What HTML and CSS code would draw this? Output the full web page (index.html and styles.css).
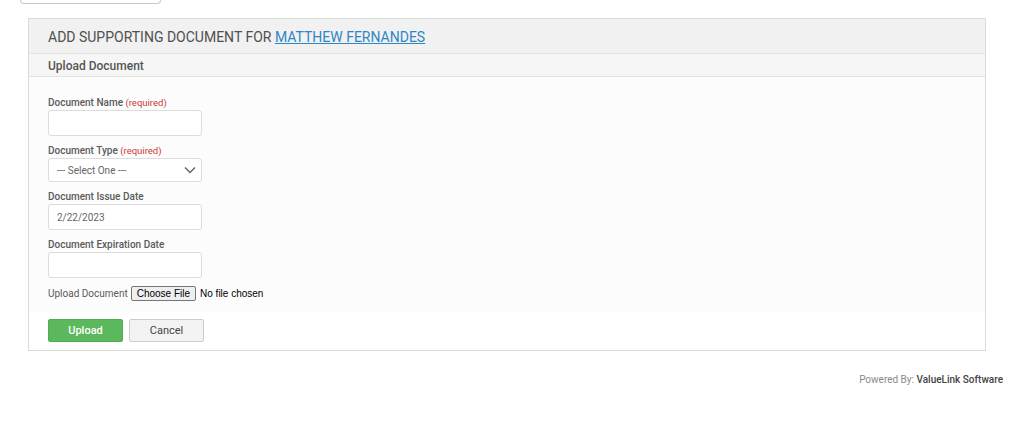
FILE: index.html
```html
<!DOCTYPE html>
<html>
<head>
<meta charset="utf-8">
<link rel="stylesheet" href="styles.css">
</head>
<body>
<div class="topbtn"></div>
<div class="panel">
  <div class="panel-head">ADD SUPPORTING DOCUMENT FOR <a href="#" class="name">MATTHEW FERNANDES</a></div>
  <div class="panel-sub">Upload Document</div>
  <div class="panel-body">
    <div class="field">
      <label class="lbl">Document Name <span class="req">(required)</span></label>
      <input class="inp" type="text">
    </div>
    <div class="field">
      <label class="lbl">Document Type <span class="req">(required)</span></label>
      <div class="select">
        <span>--- Select One ---</span>
        <svg width="12" height="8" viewBox="0 0 12 8"><path d="M1 1.5 L6 6.5 L11 1.5" fill="none" stroke="#666" stroke-width="1.5"/></svg>
      </div>
    </div>
    <div class="field">
      <label class="lbl">Document Issue Date</label>
      <input class="inp" type="text" value="2/22/2023">
    </div>
    <div class="field">
      <label class="lbl">Document Expiration Date</label>
      <input class="inp" type="text">
    </div>
    <div class="file-row">
      <span class="lbl">Upload Document</span>
      <span class="choose">Choose File</span>
      <span class="nofile">No file chosen</span>
    </div>
  </div>
  <div class="panel-foot">
    <button class="btn btn-green">Upload</button>
    <button class="btn btn-plain">Cancel</button>
  </div>
</div>
<div class="powered">Powered By: <span class="vl">ValueLink Software</span></div>
</body>
</html>
```
FILE: styles.css
```css
* { box-sizing: border-box; }
body {
  margin: 0;
  font-family: Roboto, "Liberation Sans", Arial, sans-serif;
  color: #555;
  background: #fff;
}
.topbtn {
  margin-left: 20px;
  width: 141px;
  height: 4px;
  border: 1px solid #c8c8c8;
  border-top: none;
  border-radius: 0 0 4px 4px;
  background: #fff;
}
.panel {
  margin: 14px 0 0 28px;
  width: 958px;
  border: 1px solid #d6dcd6;
}
.panel-head {
  height: 35px;
  background: #f1f1f1;
  border-bottom: 1px solid #e2e4e2;
  padding: 9px 0 0 19px;
  font-size: 14px;
  font-weight: 400;
  color: #4f4f4f;
  line-height: 18px;
}
.name { color: #2f86c6; text-decoration: underline; font-weight: 400; }
.panel-sub {
  height: 23px;
  background: #f6f6f6;
  border-bottom: 1px solid #e2e4e2;
  padding: 5px 0 0 19px;
  font-size: 12px;
  font-weight: 500;
  line-height: 14px;
}
.panel-body {
  background: #fcfcfc;
  padding: 19px 0 11px 19px;
}
.field { margin-bottom: 8px; }
.lbl {
  display: block;
  font-size: 10px;
  font-weight: 500;
  line-height: 13px;
  color: #5a5a5a;
  margin-bottom: 1px;
}
.req { color: #c9383b; font-weight: 400; font-size: 9.5px; }
.inp {
  display: block;
  width: 154px;
  height: 26px;
  border: 1px solid #dcdcdc;
  border-radius: 3px;
  background: #fff;
  padding: 0 8px;
  font-family: inherit;
  font-size: 10px;
  color: #666;
  outline: none;
}
.select {
  width: 154px;
  height: 24px;
  border: 1px solid #dcdcdc;
  border-radius: 3px;
  background: #fff;
  display: flex;
  align-items: center;
  justify-content: space-between;
  padding: 0 5px 0 8px;
  font-size: 10px;
  color: #666;
}
.file-row {
  display: flex;
  align-items: center;
  gap: 3px;
  height: 15px;
}
.file-row .lbl { display: inline; margin: 0; font-weight: 400; }
.choose {
  height: 15px;
  border: 1px solid #767676;
  border-radius: 2px;
  background: #efefef;
  font-family: "Liberation Sans", Arial, sans-serif;
  font-size: 10px;
  color: #000;
  padding: 0 5px;
  line-height: 13px;
}
.nofile {
  font-family: "Liberation Sans", Arial, sans-serif;
  font-size: 10px;
  color: #000;
  margin-left: 1px;
}
.panel-foot {
  background: #fff;
  padding: 7px 0 8px 19px;
  display: flex;
  gap: 6px;
}
.btn {
  width: 75px;
  height: 23px;
  border-radius: 2px;
  font-family: inherit;
  font-size: 11px;
  cursor: pointer;
}
.btn-green {
  background: #5cb85c;
  border: 1px solid #4cae4c;
  color: #fff;
  font-weight: 500;
}
.btn-plain {
  background: #f3f3f3;
  border: 1px solid #ccc;
  color: #444;
}
.powered {
  text-align: right;
  padding-right: 21px;
  margin-top: 23px;
  font-size: 10px;
  color: #888;
}
.vl { color: #444; font-weight: 500; }
```
